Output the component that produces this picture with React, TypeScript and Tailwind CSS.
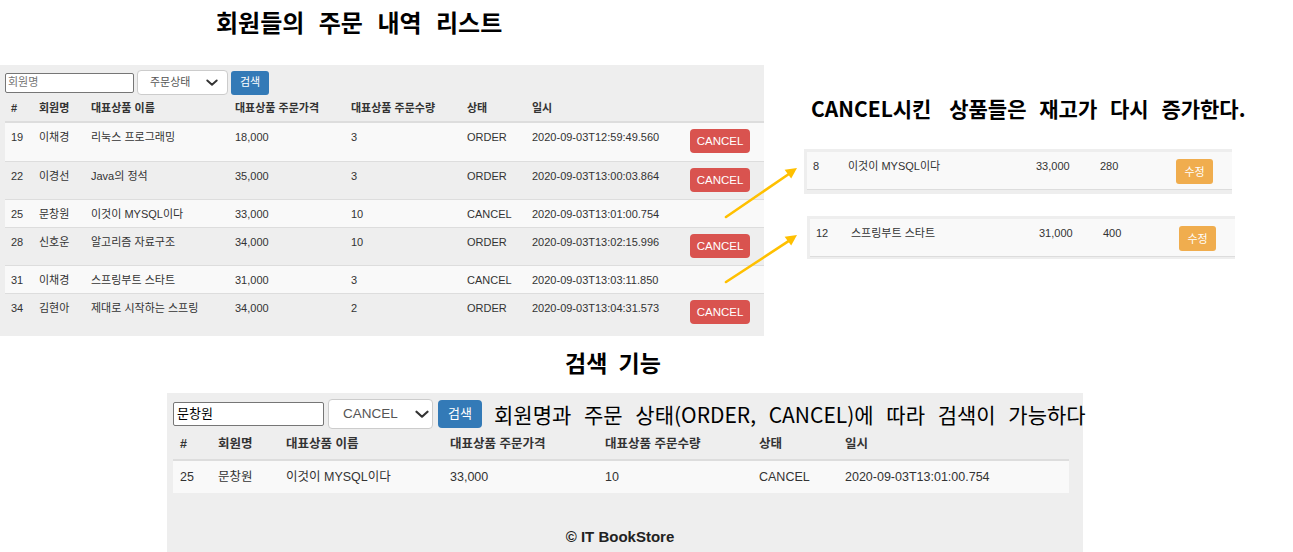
import React from "react";

type Row = {
  id: string;
  name: string;
  item: string;
  price: string;
  qty: string;
  status: string;
  date: string;
  btn: boolean;
};

const rows: Row[] = [
  { id: "19", name: "이채경", item: "리눅스 프로그래밍", price: "18,000", qty: "3", status: "ORDER", date: "2020-09-03T12:59:49.560", btn: true },
  { id: "22", name: "이경선", item: "Java의 정석", price: "35,000", qty: "3", status: "ORDER", date: "2020-09-03T13:00:03.864", btn: true },
  { id: "25", name: "문창원", item: "이것이 MYSQL이다", price: "33,000", qty: "10", status: "CANCEL", date: "2020-09-03T13:01:00.754", btn: false },
  { id: "28", name: "신호운", item: "알고리즘 자료구조", price: "34,000", qty: "10", status: "ORDER", date: "2020-09-03T13:02:15.996", btn: true },
  { id: "31", name: "이채경", item: "스프링부트 스타트", price: "31,000", qty: "3", status: "CANCEL", date: "2020-09-03T13:03:11.850", btn: false },
  { id: "34", name: "김현아", item: "제대로 시작하는 스프링", price: "34,000", qty: "2", status: "ORDER", date: "2020-09-03T13:04:31.573", btn: true },
];

const headers = ["#", "회원명", "대표상품 이름", "대표상품 주문가격", "대표상품 주문수량", "상태", "일시"];

const sans = "font-['Liberation_Sans','Noto_Sans_CJK_KR',sans-serif]";

function Chevron({ size }: { size: number }) {
  return (
    <svg width={size} height={size * 0.6} viewBox="0 0 14 8" fill="none">
      <polyline points="1.5,1.5 7,6.5 12.5,1.5" stroke="#333" strokeWidth="2.2" strokeLinecap="round" strokeLinejoin="round" />
    </svg>
  );
}

function LeftPanel() {
  const cols = "grid grid-cols-[28px_52px_144px_116px_116px_65px_158px_1fr]";
  return (
    <div className={`h-[271px] bg-[#eeeeee] pl-[5px] pt-[5px] text-[#333] ${sans}`}>
      <div className="flex h-[25px] items-center">
        <div className="flex h-[20px] w-[129px] shrink-0 items-center rounded-[2px] border border-[#767676] bg-white pl-[2px] text-[11px] text-[#757575]">
          회원명
        </div>
        <div className="ml-[3px] flex h-[25px] w-[91px] shrink-0 items-center rounded-[4px] border border-[#cccccc] bg-white pl-[12px] text-[11px] text-[#555]">
          <span>주문상태</span>
          <span className="ml-[16px] flex items-center">
            <Chevron size={12} />
          </span>
        </div>
        <div className="ml-[3px] flex h-[24px] w-[38px] shrink-0 items-center justify-center rounded-[3px] bg-[#337ab7] text-[11px] text-white">
          검색
        </div>
      </div>
      <div className={`${cols} h-[28px] items-center border-b-2 border-[#dddddd] text-[11px] font-bold`}>
        {headers.map((h) => (
          <div key={h} className="pl-[6px] whitespace-nowrap">
            {h}
          </div>
        ))}
        <div />
      </div>
      {rows.map((r, i) => (
        <div
          key={r.id}
          className={`${cols} ${r.btn ? "h-[38px]" : "h-[28px]"} ${i % 2 === 0 ? "bg-[#f9f9f9]" : ""} ${i > 0 ? "border-t border-[#dddddd]" : ""} text-[11px] leading-[16px]`}
        >
          {[r.id, r.name, r.item, r.price, r.qty, r.status, r.date].map((c, j) => (
            <div key={j} className="pl-[6px] pt-[6px] whitespace-nowrap">
              {c}
            </div>
          ))}
          <div className="pl-[6px] pt-[6px]">
            {r.btn && (
              <div className="flex h-[24px] w-[60px] items-center justify-center rounded-[4px] bg-[#d9534f] text-[11.5px] text-white">
                CANCEL
              </div>
            )}
          </div>
        </div>
      ))}
    </div>
  );
}

function StockRow({ id, item, price, qty, padTop }: { id: string; item: string; price: string; qty: string; padTop: string }) {
  return (
    <div className={`w-[428px] bg-[#eeeeee] pl-[3px] pt-[3px] ${padTop}`}>
      <div className={`grid h-[38px] grid-cols-[35px_188px_64px_76px_1fr] border-b border-[#dddddd] bg-[#f9f9f9] pl-[6px] text-[11px] leading-[16px] text-[#333] ${sans}`}>
        <div className="pt-[6px]">{id}</div>
        <div className="pt-[6px] whitespace-nowrap">{item}</div>
        <div className="pt-[6px]">{price}</div>
        <div className="pt-[6px]">{qty}</div>
        <div className="pt-[7px]">
          <div className="flex h-[25px] w-[37px] items-center justify-center rounded-[3px] bg-[#f0ad4e] text-[11px] text-white">
            수정
          </div>
        </div>
      </div>
    </div>
  );
}

function BottomPanel() {
  const cols = "grid grid-cols-[38px_68px_164px_155px_154px_86px_1fr]";
  const data = ["25", "문창원", "이것이 MYSQL이다", "33,000", "10", "CANCEL", "2020-09-03T13:01:00.754"];
  return (
    <div className={`ml-[167px] h-[159px] w-[916px] bg-[#eeeeee] pl-[6px] pt-[6px] text-[#333] ${sans}`}>
      <div className="flex h-[30px] items-center">
        <div className="flex h-[24px] w-[151px] shrink-0 items-center rounded-[2px] border border-[#767676] bg-white pl-[3px] text-[13px] text-black">
          문창원
        </div>
        <div className="ml-[4px] flex h-[30px] w-[105px] shrink-0 items-center rounded-[4px] border border-[#cccccc] bg-white pl-[14px] text-[13.5px] text-[#555]">
          <span>CANCEL</span>
          <span className="ml-[17px] flex items-center">
            <Chevron size={14} />
          </span>
        </div>
        <div className="ml-[5px] flex h-[28px] w-[44px] shrink-0 items-center justify-center rounded-[4px] bg-[#337ab7] text-[13px] text-white">
          검색
        </div>
        <div className="ml-[12px] shrink-0 whitespace-nowrap font-['Noto_Sans_CJK_KR',sans-serif] text-[21px] leading-[26px] text-black [word-spacing:8px]">
          회원명과 주문 상태(ORDER, CANCEL)에 따라 검색이 가능하다
        </div>
      </div>
      <div className={`${cols} h-[32px] w-[896px] items-center border-b-2 border-[#dddddd] text-[12.5px] font-bold`}>
        {headers.map((h) => (
          <div key={h} className="pl-[7px] whitespace-nowrap">
            {h}
          </div>
        ))}
      </div>
      <div className={`${cols} h-[32px] w-[896px] items-center bg-[#f9f9f9] text-[12.5px]`}>
        {data.map((c, j) => (
          <div key={j} className="pl-[7px] whitespace-nowrap">
            {c}
          </div>
        ))}
      </div>
      <div className="mt-[35px] pr-[16px] text-center font-['Liberation_Sans',sans-serif] text-[15px] font-bold leading-[17px] text-[#222]">
        © IT BookStore
      </div>
    </div>
  );
}

function Arrows() {
  const c = "#ffc000";
  return (
    <svg className="pointer-events-none absolute left-0 top-0" width="1293" height="552" viewBox="0 0 1293 552">
      <line x1="726" y1="217" x2="788.5" y2="174.2" stroke={c} strokeWidth="2.6" strokeLinecap="round" />
      <polygon points="797,168 791.2,178.6 784.6,169.8" fill={c} />
      <line x1="726" y1="282" x2="788.5" y2="241.2" stroke={c} strokeWidth="2.6" strokeLinecap="round" />
      <polygon points="797,235 791.2,245.6 784.6,236.8" fill={c} />
    </svg>
  );
}

export default function App() {
  return (
    <div className="relative h-[552px] w-[1293px] overflow-hidden bg-white">
      <div className="flex h-[336px]">
        <div className="flex w-[764px] shrink-0 flex-col">
          <div className="h-[65px] pl-[216px] pt-[7px] font-['Noto_Sans_CJK_KR',sans-serif] text-[24px] font-bold leading-[30px] text-black [word-spacing:9px]">
            회원들의 주문 내역 리스트
          </div>
          <LeftPanel />
        </div>
        <div className="flex flex-col pl-[40px]">
          <div className="ml-[7px] mt-[95px] whitespace-nowrap font-['Noto_Sans_CJK_KR',sans-serif] text-[21px] font-bold leading-[26px] text-black [word-spacing:8px]">
            <span className="mr-[5px]">CANCEL시킨</span> 상품들은 재고가 다시 증가한다.
          </div>
          <div className="mt-[28px]">
            <StockRow id="8" item="이것이 MYSQL이다" price="33,000" qty="280" padTop="pb-[4px]" />
          </div>
          <div className="ml-[3px] mt-[22px]">
            <StockRow id="12" item="스프링부트 스타트" price="31,000" qty="400" padTop="pb-[2px]" />
          </div>
        </div>
      </div>
      <div className="h-[57px] pl-[565px] pt-[11px] font-['Noto_Sans_CJK_KR',sans-serif] text-[23px] font-bold leading-[30px] text-black [word-spacing:6px]">
        검색 기능
      </div>
      <BottomPanel />
      <Arrows />
    </div>
  );
}
